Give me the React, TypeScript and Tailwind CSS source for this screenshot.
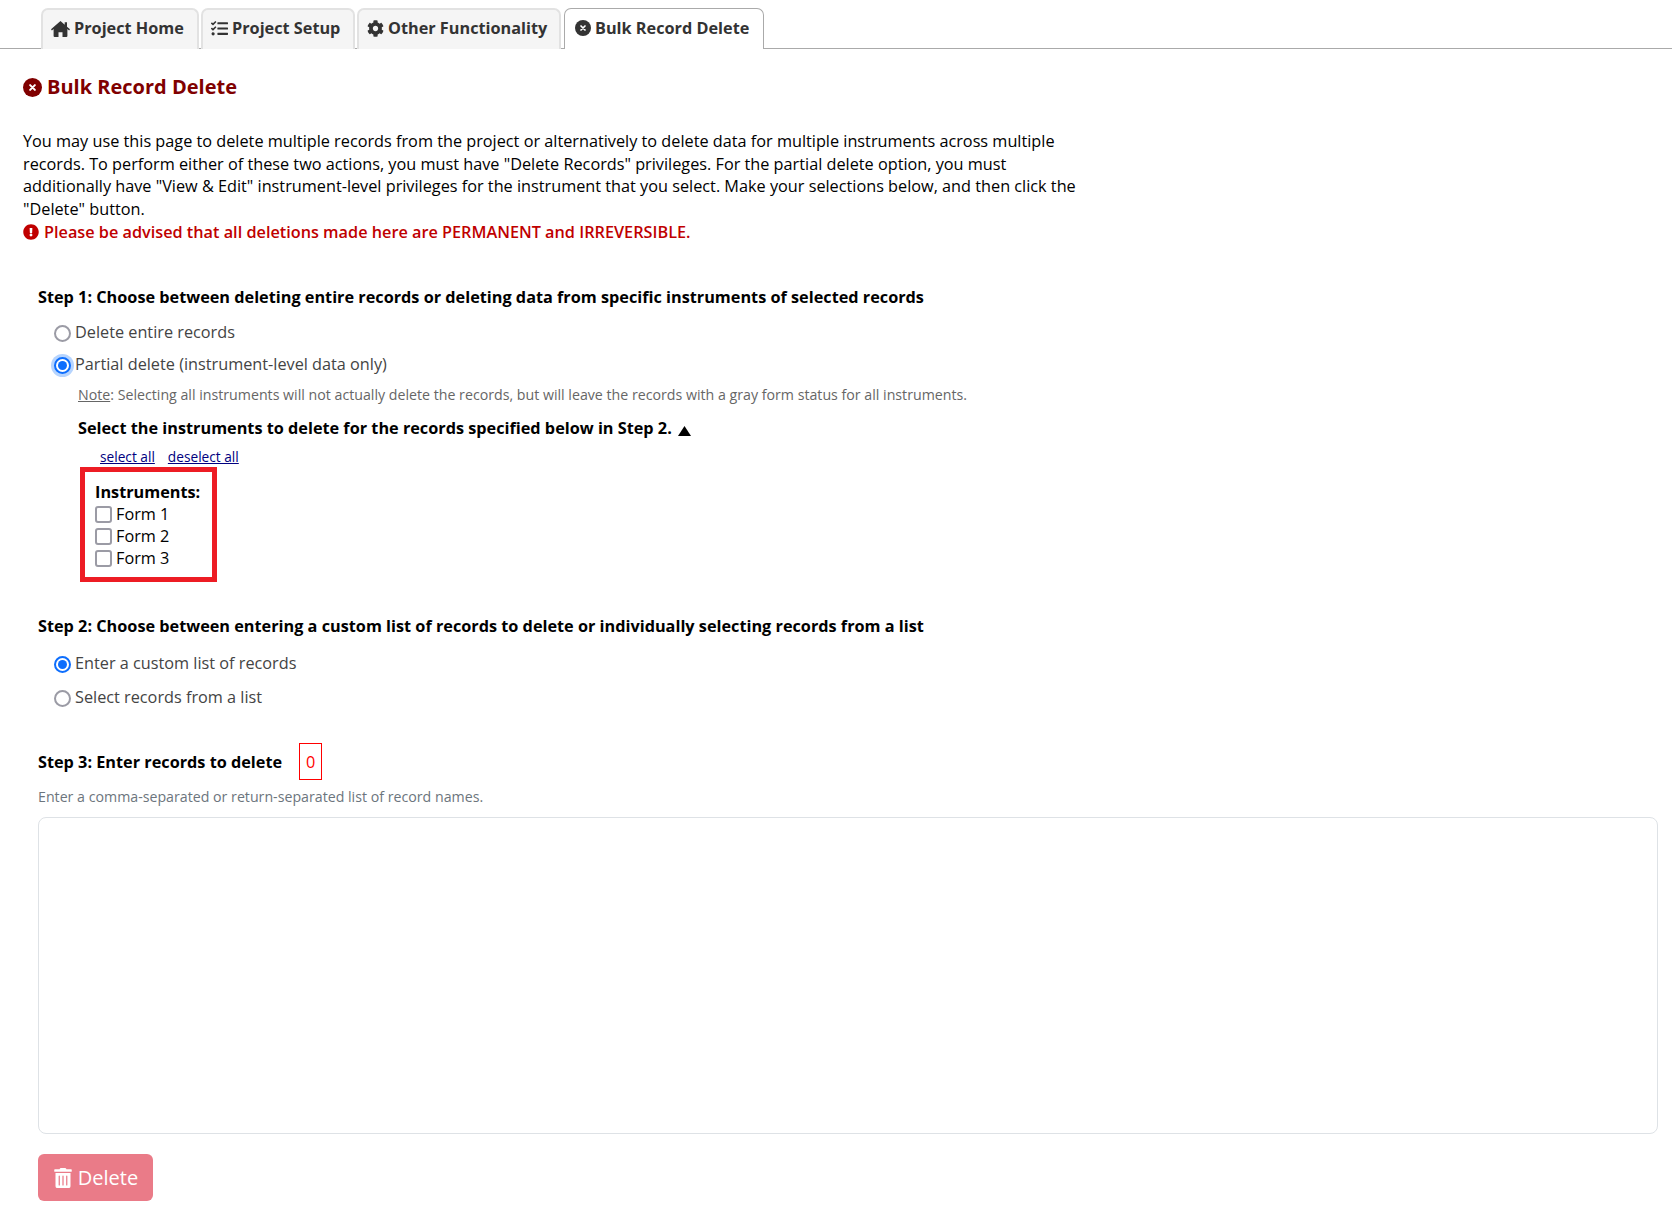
import { FaTasks, FaCog, FaExclamationCircle, FaTrashAlt } from 'react-icons/fa'

function CircleX({ size, color }: { size: number; color: string }) {
  return (
    <svg width={size} height={size} viewBox="0 0 16 16" className="shrink-0">
      <circle cx="8" cy="8" r="8" fill={color} />
      <path d="M6 6l4 4M10 6l-4 4" stroke="#fff" strokeWidth="1.7" strokeLinecap="round" />
    </svg>
  )
}

function HomeIcon() {
  return (
    <svg width="19" height="16" viewBox="0 0 19 16" className="shrink-0" fill="#333">
      <path d="M9.5 0L0 8.3l.9 1.2 1.7-1.4V15a1 1 0 0 0 1 1h3.9v-4.8h4V16h3.9a1 1 0 0 0 1-1V8.1l1.7 1.4.9-1.2-3-2.6V1.2h-2.3v2.5z" />
    </svg>
  )
}

const tabs = [
  { label: 'Project Home', icon: <HomeIcon />, w: 'w-[158px]' },
  { label: 'Project Setup', icon: <FaTasks className="text-[17px]" />, w: 'w-[154px]' },
  { label: 'Other Functionality', icon: <FaCog className="text-[17px]" />, w: 'w-[204px]' },
]

function Radio({ checked, focused }: { checked?: boolean; focused?: boolean }) {
  return (
    <span
      className={`w-[17px] h-[17px] rounded-full shrink-0 flex items-center justify-center border-[2px] ${
        checked ? 'border-[#0d6efd] bg-white' : 'border-[#9b9ba5] bg-white'
      } ${focused ? 'shadow-[0_0_0_3px_#b6d4fe]' : ''}`}
    >
      {checked && <span className="w-[9px] h-[9px] rounded-full bg-[#0d6efd]" />}
    </span>
  )
}

function RadioRow({ label, checked, focused, className }: { label: string; checked?: boolean; focused?: boolean; className: string }) {
  return (
    <div className={`flex items-center pl-[16px] text-[#444] ${className}`}>
      <Radio checked={checked} focused={focused} />
      <span className="ml-[4px] -mt-[2px]">{label}</span>
    </div>
  )
}

export default function App() {
  return (
    <div className="min-h-screen bg-white text-black font-['Open_Sans',sans-serif] text-[16.25px] leading-[22.7px]">
      {/* Tabs */}
      <div className="h-[49px] border-b border-[#aaa] flex items-end pl-[41px] gap-[2px]">
        {tabs.map((t) => (
          <div
            key={t.label}
            className={`${t.w} h-[41px] -mb-px flex items-center gap-[4px] pl-[8px] pb-[2px] bg-[#f5f5f5] border-2 border-b-0 border-[#e2e2e2] rounded-t-[7px] font-bold text-[16.25px] text-[#333]`}
          >
            {t.icon}
            <span>{t.label}</span>
          </div>
        ))}
        <div className="w-[200px] h-[41px] -mb-px ml-[1px] flex items-center gap-[4px] pl-[10px] pb-[2px] bg-white border border-b-0 border-[#aaa] rounded-t-[7px] font-bold text-[16.25px] text-[#333] relative z-10">
          <CircleX size={16} color="#333" />
          <span>Bulk Record Delete</span>
        </div>
      </div>

      <div className="pl-[23px] pr-[14px]">
        <h1 className="mt-[26px] flex items-center gap-[5px] text-[20px] leading-[24px] font-bold text-[#800000]">
          <CircleX size={19} color="#800000" />
          Bulk Record Delete
        </h1>

        <p className="mt-[31px] w-[1060px]">
          You may use this page to delete multiple records from the project or alternatively to delete data for multiple instruments across multiple
          records. To perform either of these two actions, you must have "Delete Records" privileges. For the partial delete option, you must
          additionally have "View &amp; Edit" instrument-level privileges for the instrument that you select. Make your selections below, and then click the
          "Delete" button.
        </p>
        <p className="flex items-center gap-[5px] font-semibold text-[#c00000]">
          <FaExclamationCircle className="text-[16px]" />
          Please be advised that all deletions made here are PERMANENT and IRREVERSIBLE.
        </p>

        <div className="pl-[15px]">
          <h2 className="mt-[42px] font-bold">Step 1: Choose between deleting entire records or deleting data from specific instruments of selected records</h2>
          <RadioRow label="Delete entire records" className="mt-[15px]" />
          <RadioRow label="Partial delete (instrument-level data only)" checked focused className="mt-[11px]" />

          <div className="pl-[40px]">
            <p className="mt-[8px] text-[14.2px] text-[#666] leading-[22px]">
              <span className="underline">Note</span>: Selecting all instruments will not actually delete the records, but will leave the records with a gray form status for all instruments.
            </p>
            <p className="mt-[11px] font-bold flex items-center">
              Select the instruments to delete for the records specified below in Step 2.
              <svg width="13" height="10" viewBox="0 0 13 10" className="ml-[6px] mt-[6px]">
                <polygon points="6.5,0 13,10 0,10" fill="#000" />
              </svg>
            </p>
            <div className="mt-[7px] pl-[22px] flex gap-[13px] text-[13.7px] text-[#000080] underline leading-[22px]">
              <span>select all</span>
              <span>deselect all</span>
            </div>
            <div className="mt-[-1px] ml-[2px] w-[137px] h-[115px] border-[5px] border-[#ed1c24] px-[10px] pt-[9px] leading-[22px]">
              <div className="font-bold">Instruments:</div>
              {['Form 1', 'Form 2', 'Form 3'].map((f) => (
                <div key={f} className="flex items-center gap-[4px]">
                  <span className="w-[17px] h-[17px] rounded-[3px] border-[2px] border-[#9b9ba5] shrink-0" />
                  {f}
                </div>
              ))}
            </div>
          </div>

          <h2 className="mt-[33px] font-bold">Step 2: Choose between entering a custom list of records to delete or individually selecting records from a list</h2>
          <RadioRow label="Enter a custom list of records" checked className="mt-[16px]" />
          <RadioRow label="Select records from a list" className="mt-[13px]" />

          <div className="mt-[35px] flex items-center font-bold">
            Step 3: Enter records to delete
            <span className="ml-[17px] w-[23px] h-[37px] flex items-center justify-center border border-[#f00] text-[#f00] font-normal">0</span>
          </div>
          <p className="mt-[6px] text-[14.2px] text-[#6c757d] leading-[22px]">Enter a comma-separated or return-separated list of record names.</p>
          <textarea className="block mt-[9px] w-[1620px] h-[317px] border border-[#dee2e6] rounded-[8px] resize-none" />
          <button className="mt-[20px] w-[115px] h-[47px] flex items-center justify-center gap-[5px] rounded-[6px] bg-[#ea7b88] text-white text-[20px]">
            <FaTrashAlt className="text-[20px]" />
            Delete
          </button>
        </div>
      </div>
    </div>
  )
}
